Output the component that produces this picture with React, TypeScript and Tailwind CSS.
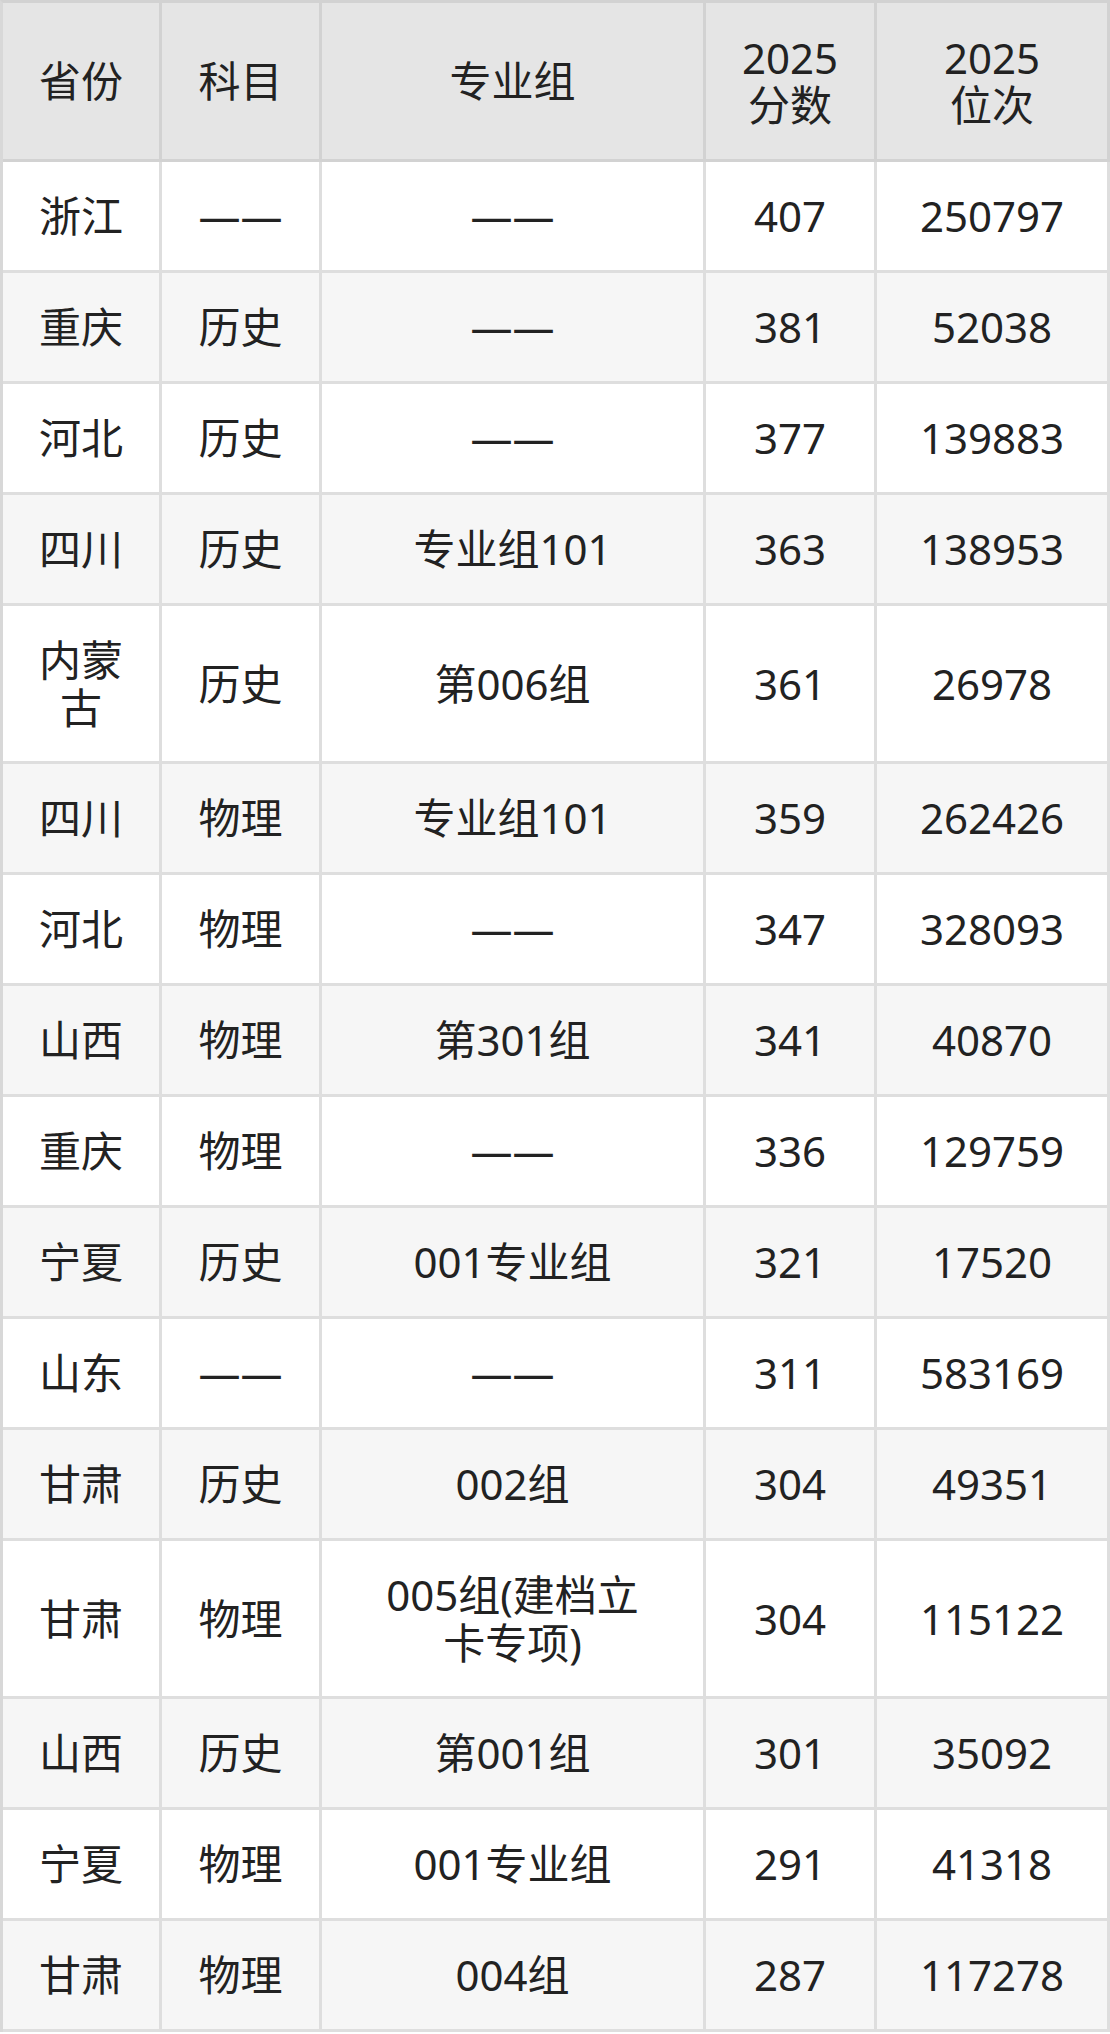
const rows: { p: string; s: string; g: string; score: string; rank: string }[] = [
  { p: "浙江", s: "——", g: "——", score: "407", rank: "250797" },
  { p: "重庆", s: "历史", g: "——", score: "381", rank: "52038" },
  { p: "河北", s: "历史", g: "——", score: "377", rank: "139883" },
  { p: "四川", s: "历史", g: "专业组101", score: "363", rank: "138953" },
  { p: "内蒙古", s: "历史", g: "第006组", score: "361", rank: "26978" },
  { p: "四川", s: "物理", g: "专业组101", score: "359", rank: "262426" },
  { p: "河北", s: "物理", g: "——", score: "347", rank: "328093" },
  { p: "山西", s: "物理", g: "第301组", score: "341", rank: "40870" },
  { p: "重庆", s: "物理", g: "——", score: "336", rank: "129759" },
  { p: "宁夏", s: "历史", g: "001专业组", score: "321", rank: "17520" },
  { p: "山东", s: "——", g: "——", score: "311", rank: "583169" },
  { p: "甘肃", s: "历史", g: "002组", score: "304", rank: "49351" },
  { p: "甘肃", s: "物理", g: "005组(建档立卡专项)", score: "304", rank: "115122" },
  { p: "山西", s: "历史", g: "第001组", score: "301", rank: "35092" },
  { p: "宁夏", s: "物理", g: "001专业组", score: "291", rank: "41318" },
  { p: "甘肃", s: "物理", g: "004组", score: "287", rank: "117278" },
];

export default function App() {
  const th = "border-r-[3px] border-b-[3px] border-[#d2d2d2] py-0 px-[21px] font-normal align-middle";
  const td = "border-r-[3px] border-b-[3px] border-[#dedede] py-0 px-[21px] align-middle";
  return (
    <div className="w-[1110px] bg-white font-['Noto_Sans','Noto_Sans_CJK_SC',sans-serif] text-[42px] leading-[47.5px] text-[#222222]">
      <table className="w-[1110px] table-fixed border-separate border-spacing-0 border-l-[3px] border-t-[3px] border-l-[#d8d8d8] border-t-[#d2d2d2] text-center">
        <colgroup>
          <col className="w-[159px]" />
          <col className="w-[160px]" />
          <col className="w-[384px]" />
          <col className="w-[171px]" />
          <col className="w-[233px]" />
        </colgroup>
        <thead>
          <tr className="h-[159px] bg-[#e5e5e5]">
            <th className={th}>省份</th>
            <th className={th}>科目</th>
            <th className={th}>专业组</th>
            <th className={th}>
              2025
              <br />
              分数
            </th>
            <th className={th}>
              2025
              <br />
              位次
            </th>
          </tr>
        </thead>
        <tbody>
          {rows.map((r, i) => (
            <tr
              key={i}
              className={
                (i === 4 || i === 12 ? "h-[158px] " : "h-[111px] ") +
                (i % 2 === 1 ? "bg-[#f6f6f6]" : "bg-white")
              }
            >
              <td className={td}>{r.p}</td>
              <td className={td}>{r.s}</td>
              <td className={td + " !px-[48px]"}>{r.g}</td>
              <td className={td}>{r.score}</td>
              <td className={td}>{r.rank}</td>
            </tr>
          ))}
        </tbody>
      </table>
    </div>
  );
}
